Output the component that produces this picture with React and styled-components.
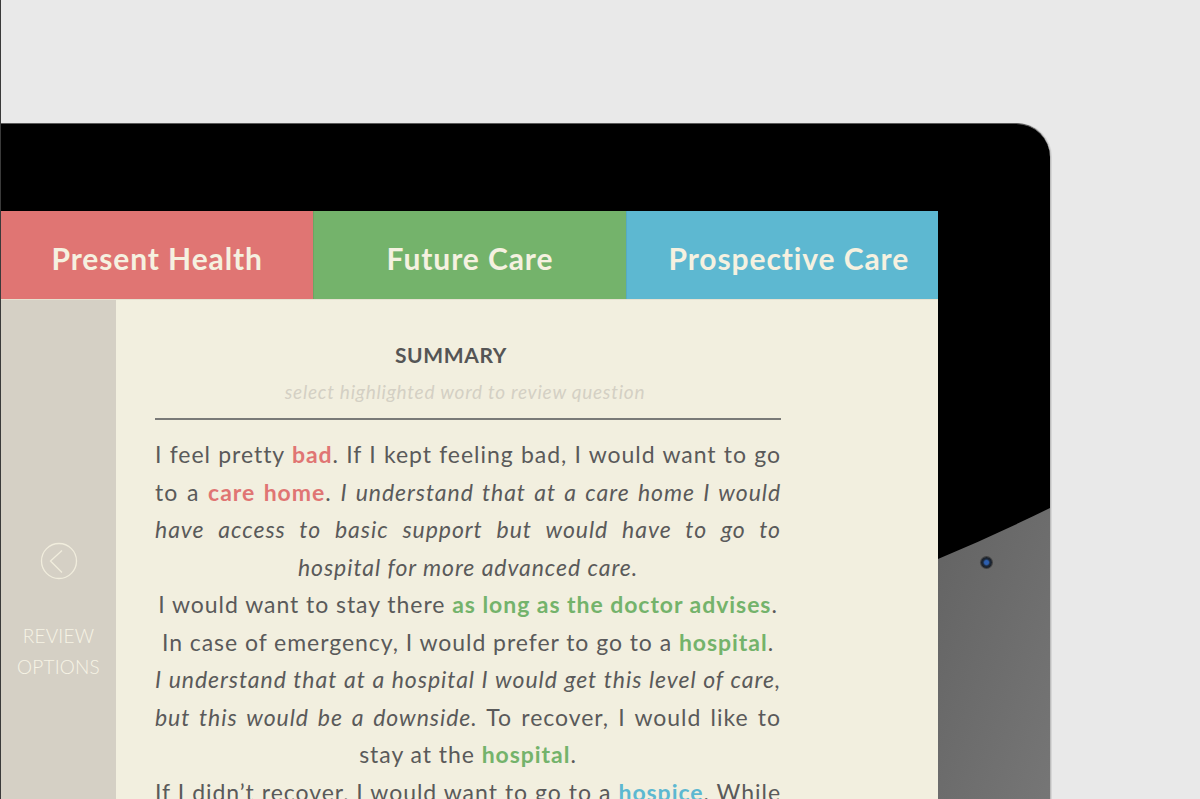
import React from "react";
import styled, { createGlobalStyle } from "styled-components";

const GlobalStyle = createGlobalStyle`
  html, body { margin: 0; padding: 0; background: #e9e9e9; }
  body { overflow: hidden; font-family: Lato, "Open Sans", sans-serif; }
  * { box-sizing: border-box; }
`;

const Page = styled.div`
  height: 799px;
  padding-top: 123px;
  border-left: 1px solid #3a3a3a;
  overflow: hidden;
  background: #e9e9e9;
`;

const Tablet = styled.div`
  position: relative;
  width: 1049px;
  height: 676px;
  background: #000;
  border-top: 1px solid #5a5a5a;
  border-top-right-radius: 34px;
  box-shadow: 1px 0 0 #bdbdbd, 2px 0 0 #d6d6d6;
  padding: 87px 112px 0 0;
`;

const Reflection = styled.svg`
  position: absolute;
  left: 937px;
  top: 384px;
  width: 112px;
  height: 300px;
`;

const Camera = styled.div`
  position: absolute;
  left: 980px;
  top: 433px;
  width: 11px;
  height: 11px;
  border-radius: 50%;
  background: radial-gradient(circle at 50% 50%, #2d5fb0 0 25%, #1d2a3c 45%, #161a20 75%);
  box-shadow: 0 0 0 1px rgba(40, 40, 40, 0.6);
`;

const Screen = styled.div`
  width: 937px;
  height: 588px;
  display: flex;
  flex-direction: column;
  overflow: hidden;
  background: #f2efdf;
`;

const Tabs = styled.div`
  display: grid;
  grid-template-columns: repeat(3, minmax(0, 1fr));
  height: 89px;
  border-bottom: 1px solid #e6e2d1;
  flex: none;
`;

const Tab = styled.div`
  display: flex;
  align-items: center;
  justify-content: center;
  padding-top: 5px;
  padding-left: ${(p) => p.$shift || 0}px;
  background: ${(p) => p.$color};
  color: #f5f1e0;
  font-family: Lato, sans-serif;
  font-weight: 700;
  font-size: 30px;
  letter-spacing: 0.9px;
  white-space: nowrap;
  & + & { border-left: 1px solid rgba(0, 0, 0, 0.07); }
`;

const Body = styled.div`
  flex: 1;
  display: flex;
  min-height: 0;
`;

const Sidebar = styled.div`
  width: 115px;
  flex: none;
  background: #d5d0c5;
  display: flex;
  flex-direction: column;
  align-items: center;
  padding-top: 242px;
`;

const BackIcon = styled.svg`
  width: 38px;
  height: 38px;
`;

const SideLabel = styled.div`
  margin-top: 40px;
  font-family: Lato, sans-serif;
  font-weight: 300;
  font-size: 19px;
  line-height: 31px;
  color: #f7f4e6;
  text-align: center;
  letter-spacing: 0.2px;
`;

const Content = styled.div`
  flex: 1;
  padding: 40px 0 0 39px;
`;

const Column = styled.div`
  width: 626px;
`;

const Title = styled.div`
  text-align: center;
  padding-right: 34px;
  font-family: Lato, sans-serif;
  font-weight: 700;
  font-size: 21px;
  line-height: 30px;
  letter-spacing: 0.6px;
  color: #555555;
`;

const Subtitle = styled.div`
  text-align: center;
  padding-right: 6px;
  margin-top: 10px;
  font-family: Lato, sans-serif;
  font-style: italic;
  font-size: 19px;
  line-height: 24px;
  letter-spacing: 0.75px;
  color: #d4d0c4;
`;

const Divider = styled.div`
  height: 2px;
  background: #7a7a78;
  margin-top: 14px;
  margin-bottom: 16px;
`;

const Text = styled.div`
  font-family: Lato, sans-serif;
  font-size: 23px;
  line-height: 37.5px;
  letter-spacing: 0.95px;
  color: #5a5a5a;
`;

const Line = styled.div`
  white-space: nowrap;
  text-align: ${(p) => p.$align};
  text-align-last: ${(p) => p.$align};
`;

const Hi = styled.span`
  font-weight: 700;
  color: ${(p) => p.$color};
`;

const Em = styled.span`
  font-style: italic;
`;

const RED = "#e07573";
const GREEN = "#74b36b";
const BLUE = "#5db8d1";

export default function App() {
  return (
    <>
      <GlobalStyle />
      <Page>
        <Tablet>
          <Reflection viewBox="0 0 112 300" preserveAspectRatio="none">
            <defs>
              <linearGradient id="refl" x1="0" y1="0" x2="1" y2="1">
                <stop offset="0" stopColor="#636363" />
                <stop offset="1" stopColor="#767676" />
              </linearGradient>
            </defs>
            <path d="M0 51 Q55 28 112 0 L112 300 L0 300 Z" fill="url(#refl)" />
          </Reflection>
          <Camera />
          <Screen>
            <Tabs>
              <Tab $color={RED}>Present Health</Tab>
              <Tab $color={GREEN}>Future Care</Tab>
              <Tab $color={BLUE} $shift={13}>Prospective Care</Tab>
            </Tabs>
            <Body>
              <Sidebar>
                <BackIcon viewBox="0 0 38 38">
                  <circle cx="19" cy="19" r="17.5" fill="none" stroke="#f1eddd" strokeWidth="1.3" />
                  <path d="M22 8.5 L10.5 19 L22 30.5" fill="none" stroke="#f1eddd" strokeWidth="1.3" />
                </BackIcon>
                <SideLabel>
                  REVIEW
                  <br />
                  OPTIONS
                </SideLabel>
              </Sidebar>
              <Content>
                <Column>
                  <Title>SUMMARY</Title>
                  <Subtitle>select highlighted word to review question</Subtitle>
                  <Divider />
                  <Text>
                    <Line $align="justify">
                      I feel pretty <Hi $color={RED}>bad</Hi>. If I kept feeling bad, I would want to go
                    </Line>
                    <Line $align="justify">
                      to a <Hi $color={RED}>care home</Hi>. <Em>I understand that at a care home I would</Em>
                    </Line>
                    <Line $align="justify">
                      <Em>have access to basic support but would have to go to</Em>
                    </Line>
                    <Line $align="center">
                      <Em>hospital for more advanced care.</Em>
                    </Line>
                    <Line $align="center">
                      I would want to stay there <Hi $color={GREEN}>as long as the doctor advises</Hi>.
                    </Line>
                    <Line $align="center">
                      In case of emergency, I would prefer to go to a <Hi $color={GREEN}>hospital</Hi>.
                    </Line>
                    <Line $align="justify">
                      <Em>I understand that at a hospital I would get this level of care,</Em>
                    </Line>
                    <Line $align="justify">
                      <Em>but this would be a downside.</Em> To recover, I would like to
                    </Line>
                    <Line $align="center">
                      stay at the <Hi $color={GREEN}>hospital</Hi>.
                    </Line>
                    <Line $align="justify">
                      If I didn’t recover, I would want to go to a <Hi $color={BLUE}>hospice</Hi>.  While
                    </Line>
                  </Text>
                </Column>
              </Content>
            </Body>
          </Screen>
        </Tablet>
      </Page>
    </>
  );
}
